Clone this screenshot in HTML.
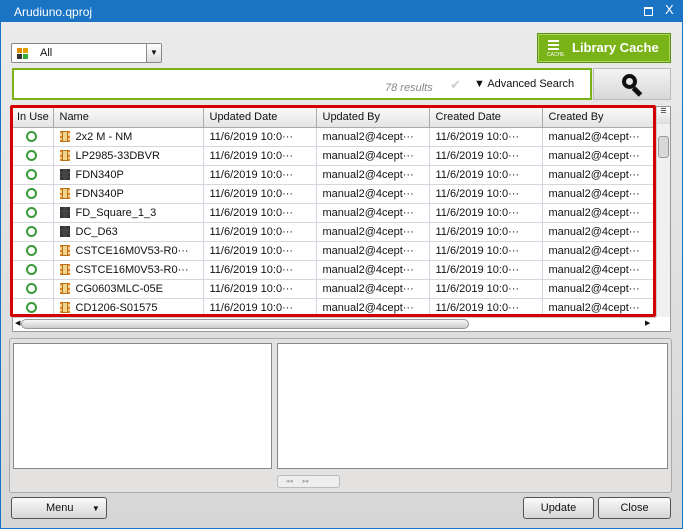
<!DOCTYPE html><html><head><style>
*{box-sizing:border-box;margin:0;padding:0}
body{width:683px;height:529px;overflow:hidden;font-family:"Liberation Sans","DejaVu Sans",sans-serif;font-size:11px;color:#111;position:relative;background:#1a73c3}
.win{position:absolute;left:1px;top:22px;width:681px;height:506px;background:linear-gradient(#ebebeb,#d6d6d6)}
.abs{position:absolute}
.btn{position:absolute;border:1px solid #555;border-radius:3px;background:linear-gradient(#fafafa,#d6d6d6);text-align:center;font-size:11px;line-height:21px}
table{border-collapse:collapse;table-layout:fixed}
td,th{height:19px;white-space:nowrap;overflow:hidden;border-right:1px solid #d6d6de;border-bottom:1px solid #d6d6de;font-weight:normal;text-align:left;padding-left:6px;font-size:11px}
th{background:linear-gradient(#fafafa,#e4e4e4);border-right:1px solid #aaa;border-bottom:1px solid #aaa;height:20px}
.c{display:inline-block;width:11px;height:11px;border:2px solid #3a9a3a;border-radius:50%;margin-left:9px;vertical-align:middle}
.ic{display:inline-block;width:10px;height:11px;vertical-align:-2px;margin-right:6px;border-left:2px dotted #e08020;border-right:2px dotted #e08020;background:#f3d48a;box-shadow:inset 0 0 0 1px #b07020}
.ic.b{border-color:#333;background:#444;box-shadow:none;border-style:dotted}
</style></head><body>
<div class="abs" style="left:14px;top:5px;color:#fff;font-size:12px">Arudiuno.qproj</div>
<div class="abs" style="left:644px;top:7px;width:9px;height:9px;border:1px solid #fff;border-top-width:2px"></div>
<div class="abs" style="left:665px;top:2px;color:#fff;font-size:13px">X</div>
<div class="win">
<div class="abs" style="left:10px;top:21px;width:151px;height:20px;background:#fff;border:1px solid #888;border-radius:2px">
 <span class="abs" style="left:5px;top:4px;width:5px;height:5px;background:#e08a00"></span><span class="abs" style="left:11px;top:4px;width:5px;height:5px;background:#e0a000"></span><span class="abs" style="left:5px;top:10px;width:5px;height:5px;background:#333"></span><span class="abs" style="left:11px;top:10px;width:5px;height:5px;background:#3a3"></span>
 <span class="abs" style="left:28px;top:3px">All</span>
 <span class="abs" style="right:0;top:0;width:15px;height:18px;border-left:1px solid #888;background:linear-gradient(#fff,#ddd);font-size:8px;text-align:center;line-height:18px">▼</span></div>
<div class="abs" style="left:536px;top:11px;width:134px;height:30px;background:#7ab317;border:1px solid #5d8d10;box-shadow:inset 0 0 0 1px #a8d860">
 <span class="abs" style="left:10px;top:6px;width:11px;height:2px;background:#fff;box-shadow:0 4px #fff,0 8px #fff"></span><span class="abs" style="left:9px;top:18px;color:#fff;font-size:5px">CACHE</span>
 <span class="abs" style="left:34px;top:6px;color:#fff;font-size:13px;font-weight:bold">Library Cache</span></div>
<div class="abs" style="left:11px;top:46px;width:580px;height:32px;background:#fff;border:2px solid #7ab317">
 <span class="abs" style="left:371px;top:12px;color:#888;font-style:italic">78 results</span>
 <span class="abs" style="left:436px;top:7px;color:#ccc;font-size:13px">✔</span>
 <span class="abs" style="left:460px;top:8px">▼ Advanced Search</span></div>
<div class="abs" style="left:592px;top:46px;width:78px;height:32px;background:linear-gradient(#f4f4f4,#d8d8d8);border:1px solid #bbb">
 <span class="abs" style="left:28px;top:5px;width:15px;height:15px;border:4px solid #111;border-radius:50%"></span><span class="abs" style="left:38px;top:20px;width:10px;height:5px;background:#111;transform:rotate(45deg)"></span></div>
<div class="abs" style="left:11px;top:84px;width:659px;height:226px;background:#fff;border:1px solid #999"></div>
<div class="abs" style="left:10px;top:85px;overflow:hidden;width:644px;height:209px">
<table style="width:644px"><colgroup><col style="width:42px"><col style="width:150px"><col style="width:113px"><col style="width:113px"><col style="width:113px"><col style="width:113px"></colgroup>
<tr><th>In Use</th><th>Name</th><th>Updated Date</th><th>Updated By</th><th>Created Date</th><th>Created By</th></tr>
<tr><td><span class="c"></span></td><td><span class="ic"></span>2x2 M - NM</td><td>11/6/2019 10:0···</td><td>manual2@4cept···</td><td>11/6/2019 10:0···</td><td>manual2@4cept···</td></tr>
<tr><td><span class="c"></span></td><td><span class="ic"></span>LP2985-33DBVR</td><td>11/6/2019 10:0···</td><td>manual2@4cept···</td><td>11/6/2019 10:0···</td><td>manual2@4cept···</td></tr>
<tr><td><span class="c"></span></td><td><span class="ic b"></span>FDN340P</td><td>11/6/2019 10:0···</td><td>manual2@4cept···</td><td>11/6/2019 10:0···</td><td>manual2@4cept···</td></tr>
<tr><td><span class="c"></span></td><td><span class="ic"></span>FDN340P</td><td>11/6/2019 10:0···</td><td>manual2@4cept···</td><td>11/6/2019 10:0···</td><td>manual2@4cept···</td></tr>
<tr><td><span class="c"></span></td><td><span class="ic b"></span>FD_Square_1_3</td><td>11/6/2019 10:0···</td><td>manual2@4cept···</td><td>11/6/2019 10:0···</td><td>manual2@4cept···</td></tr>
<tr><td><span class="c"></span></td><td><span class="ic b"></span>DC_D63</td><td>11/6/2019 10:0···</td><td>manual2@4cept···</td><td>11/6/2019 10:0···</td><td>manual2@4cept···</td></tr>
<tr><td><span class="c"></span></td><td><span class="ic"></span>CSTCE16M0V53-R0···</td><td>11/6/2019 10:0···</td><td>manual2@4cept···</td><td>11/6/2019 10:0···</td><td>manual2@4cept···</td></tr>
<tr><td><span class="c"></span></td><td><span class="ic"></span>CSTCE16M0V53-R0···</td><td>11/6/2019 10:0···</td><td>manual2@4cept···</td><td>11/6/2019 10:0···</td><td>manual2@4cept···</td></tr>
<tr><td><span class="c"></span></td><td><span class="ic"></span>CG0603MLC-05E</td><td>11/6/2019 10:0···</td><td>manual2@4cept···</td><td>11/6/2019 10:0···</td><td>manual2@4cept···</td></tr>
<tr><td><span class="c"></span></td><td><span class="ic"></span>CD1206-S01575</td><td>11/6/2019 10:0···</td><td>manual2@4cept···</td><td>11/6/2019 10:0···</td><td>manual2@4cept···</td></tr>
</table></div>
<div class="abs" style="left:9px;top:83px;width:646px;height:212px;border:3px solid #d40000;border-radius:2px"></div>
<div class="abs" style="left:655px;top:85px;width:14px;height:210px;background:#f0f0f0;border-left:1px solid #ccc">
 <div class="abs" style="left:0;top:0;width:13px;height:17px;background:linear-gradient(#fff,#ddd);font-size:7px;text-align:center">☰</div>
 <div class="abs" style="left:1px;top:29px;width:11px;height:22px;background:#d8d8d8;border:1px solid #999;border-radius:3px"></div></div>
<div class="abs" style="left:12px;top:295px;width:643px;height:13px;background:#fff;border-top:1px solid #ccc">
 <div class="abs" style="left:8px;top:1px;width:448px;height:10px;border:1px solid #999;border-radius:5px;background:linear-gradient(#f8f8f8,#ccc)"></div>
 <span class="abs" style="left:2px;top:1px;font-size:7px">◀</span><span class="abs" style="left:632px;top:1px;font-size:7px">▶</span></div>
<div class="abs" style="left:8px;top:316px;width:663px;height:155px;border:1px solid #aaa;border-radius:3px;background:#e4e2e0">
 <div class="abs" style="left:3px;top:4px;width:259px;height:126px;background:#fff;border:1px solid #888"></div>
 <div class="abs" style="left:267px;top:4px;width:391px;height:126px;background:#fff;border:1px solid #888"></div>
 <div class="abs" style="left:267px;top:136px;width:63px;height:13px;border:1px solid #bbb;border-radius:3px;background:#eee;color:#aaa;font-size:7px;line-height:11px">&nbsp;&nbsp;&nbsp;&nbsp;◂◂&nbsp;&nbsp;&nbsp;&nbsp;&nbsp;▸▸</div></div>
<div class="btn" style="left:10px;top:475px;width:96px;height:22px;text-align:left;padding-left:34px">Menu&nbsp;&nbsp;&nbsp;&nbsp;&nbsp;&nbsp;<span style="font-size:8px">▼</span></div>
<div class="btn" style="left:522px;top:475px;width:71px;height:22px">Update</div>
<div class="btn" style="left:597px;top:475px;width:73px;height:22px">Close</div>
</div>
</body></html>
